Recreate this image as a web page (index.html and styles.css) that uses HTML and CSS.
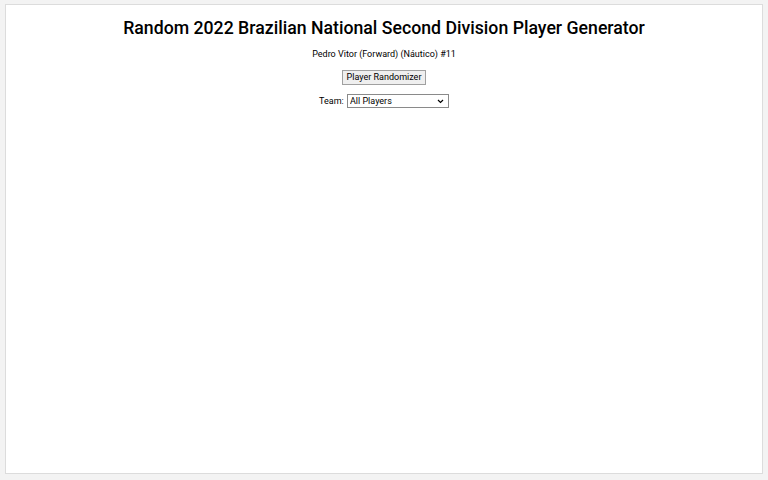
FILE: index.html
```html
<!DOCTYPE html>
<html>
<head>
<meta charset="utf-8">
<link rel="stylesheet" href="styles.css">
</head>
<body>
<div class="page">
  <h1 class="title">Random 2022 Brazilian National Second Division Player Generator</h1>
  <p class="result">Pedro Vitor (Forward) (Náutico) #11</p>
  <div class="row"><button class="btn">Player Randomizer</button></div>
  <div class="row team">
    <label class="lbl" for="team">Team:</label>
    <select id="team" class="sel"><option>All Players</option></select>
  </div>
</div>
</body>
</html>
```

FILE: styles.css
```css
html, body { margin: 0; padding: 0; }
body {
  background: #f3f3f3;
  font-family: Roboto, "Liberation Sans", sans-serif;
  color: #000;
}
.page {
  margin: 4px 5px 0 5px;
  height: 468px;
  background: #fff;
  border: 1px solid #dcdcdc;
  text-align: center;
}
.title {
  margin: 0;
  padding-top: 12px;
  font-size: 17.7px;
  font-weight: 500;
  line-height: 22px;
}
.result {
  margin: 10px 0 0 0;
  font-size: 9px;
  line-height: 11px;
}
.row { margin-top: 5px; }
.btn {
  font-family: Roboto, "Liberation Sans", sans-serif;
  font-size: 9px;
  height: 15px;
  width: 84px;
  padding: 0;
  background: #efefef;
  border: 1px solid #a0a0a0;
  border-radius: 0;
  color: #000;
}
.team { margin-top: 9px; font-size: 9px; line-height: 14px; }
.lbl { margin-right: 1px; }
.sel {
  -webkit-appearance: none;
  appearance: none;
  font-family: Roboto, "Liberation Sans", sans-serif;
  font-size: 9px;
  width: 102px;
  height: 14px;
  padding: 0 0 0 2px;
  border: 1px solid #8a8a8a;
  border-radius: 0;
  background: #fff url("data:image/svg+xml;utf8,<svg xmlns='http://www.w3.org/2000/svg' width='7' height='5' viewBox='0 0 7 5'><path d='M1 1 L3.5 3.5 L6 1' fill='none' stroke='%23000' stroke-width='1.2'/></svg>") no-repeat right 4px center;
  color: #000;
  vertical-align: middle;
}
```
